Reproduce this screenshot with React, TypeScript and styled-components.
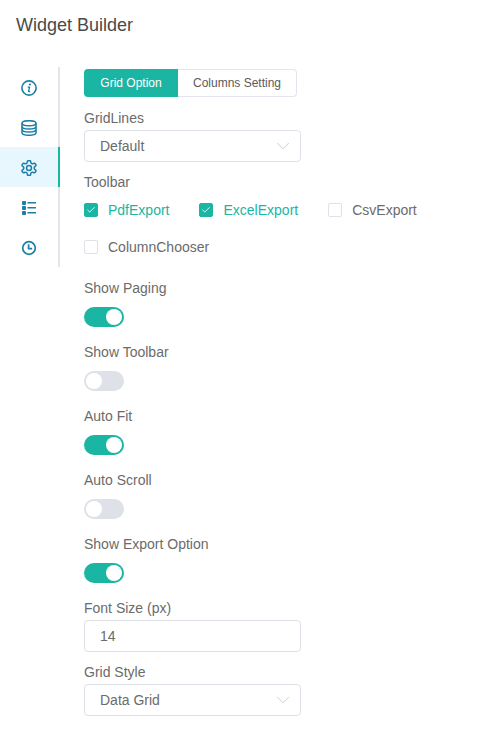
import React from 'react'
import styled, { createGlobalStyle } from 'styled-components'
import { ChevronDown, Check } from 'lucide-react'

const GlobalStyle = createGlobalStyle`
  html, body {
    margin: 0;
    padding: 0;
    background: #fff;
  }
  body {
    font-family: "Liberation Sans", Arial, sans-serif;
    color: #6b6b6b;
    font-size: 14px;
  }
`

const Page = styled.div`
  width: 496px;
  height: 731px;
  overflow: hidden;
  box-sizing: border-box;
`

const Title = styled.h1`
  margin: 0;
  padding: 13px 16px 0;
  height: 67px;
  box-sizing: border-box;
  font-size: 18px;
  line-height: 24px;
  font-weight: 400;
  color: #4a4a4a;
`

const Body = styled.div`
  display: flex;
  align-items: flex-start;
  gap: 24px;
`

const Nav = styled.nav`
  width: 60px;
  flex: none;
  display: flex;
  flex-direction: column;
  box-sizing: border-box;
  border-right: 2px solid #e3e5ec;
`

const NavItem = styled.div<{ $active?: boolean }>`
  height: 40px;
  margin-right: -2px;
  padding-top: 1px;
  display: flex;
  align-items: center;
  justify-content: center;
  color: #1b7fa7;
  background: ${p => (p.$active ? '#e8f6fd' : 'transparent')};
  border-right: 2px solid ${p => (p.$active ? '#1ab5a3' : 'transparent')};
  box-sizing: border-box;
`

const Content = styled.div`
  width: 340px;
  padding-top: 2px;
  display: flex;
  flex-direction: column;
`

const Tabs = styled.div`
  display: flex;
  width: 213px;
  height: 28px;
  margin-bottom: 11px;
`

const Tab = styled.div<{ $active?: boolean }>`
  flex: ${p => (p.$active ? '0 0 94px' : '1')};
  display: flex;
  align-items: center;
  justify-content: center;
  box-sizing: border-box;
  font-size: 12px;
  color: ${p => (p.$active ? '#fff' : '#5a5a5a')};
  background: ${p => (p.$active ? '#1ab5a3' : '#fff')};
  border: ${p => (p.$active ? 'none' : '1px solid #e3e5ec')};
  border-left: none;
  border-radius: ${p => (p.$active ? '4px 0 0 4px' : '0 4px 4px 0')};
`

const Label = styled.div`
  height: 20px;
  line-height: 20px;
  font-size: 14px;
  color: #6b6b6b;
`

const Box = styled.div`
  width: 217px;
  height: 32px;
  margin: 2px 0 10px;
  padding: 0 15px;
  display: flex;
  align-items: center;
  justify-content: space-between;
  box-sizing: border-box;
  border: 1px solid #dfe1e8;
  border-radius: 4px;
  font-size: 14px;
  color: #6b6b6b;
`

const Arrow = styled(ChevronDown)`
  color: #c0c4cc;
  margin-right: -9px;
`

const CheckGroup = styled.div`
  display: flex;
  flex-wrap: wrap;
  column-gap: 30px;
  row-gap: 1px;
  margin-bottom: 13px;
`

const CheckRow = styled.div<{ $on?: boolean }>`
  display: flex;
  align-items: center;
  gap: 10px;
  height: 36px;
  font-size: 14px;
  color: ${p => (p.$on ? '#1ab5a3' : '#6b6b6b')};
`

const CheckBox = styled.span<{ $on?: boolean }>`
  width: 14px;
  height: 14px;
  box-sizing: border-box;
  display: flex;
  align-items: center;
  justify-content: center;
  border-radius: 2px;
  border: 1px solid ${p => (p.$on ? '#1ab5a3' : '#dfe1e8')};
  background: ${p => (p.$on ? '#1ab5a3' : '#fff')};
  color: #fff;
`

const ToggleField = styled.div`
  display: flex;
  flex-direction: column;
  align-items: flex-start;
  gap: 9px;
  margin-bottom: 15px;
`

const Toggle = styled.div<{ $on?: boolean }>`
  width: 40px;
  height: 20px;
  padding: 2px;
  box-sizing: border-box;
  border-radius: 10px;
  display: flex;
  justify-content: ${p => (p.$on ? 'flex-end' : 'flex-start')};
  background: ${p => (p.$on ? '#1ab5a3' : '#dfe1e8')};
`

const Knob = styled.span`
  width: 16px;
  height: 16px;
  border-radius: 50%;
  background: #fff;
`

const InfoIcon = () => (
  <svg width="16" height="16" viewBox="0 0 16 16" fill="none" stroke="currentColor">
    <circle cx="8" cy="8" r="7.1" strokeWidth="1.6" />
    <circle cx="9" cy="4.5" r="1.1" fill="currentColor" stroke="none" />
    <path d="M6.7 7.2h1.9l-1 3.8c-.1.5.1.7.5.7h1" strokeWidth="1.3" strokeLinejoin="round" />
  </svg>
)

const DatabaseIcon = () => (
  <svg width="16" height="16" viewBox="0 0 16 16" fill="none" stroke="currentColor" strokeWidth="1.5">
    <ellipse cx="8" cy="3.2" rx="7" ry="2.5" />
    <path d="M1 3.2v9.6c0 1.4 3.1 2.5 7 2.5s7-1.1 7-2.5V3.2" />
    <path d="M1 6.4c0 1.4 3.1 2.5 7 2.5s7-1.1 7-2.5M1 9.6c0 1.4 3.1 2.5 7 2.5s7-1.1 7-2.5" />
  </svg>
)

const CogIcon = () => (
  <svg width="16" height="16" viewBox="1.5 1.5 21 21" fill="none" stroke="currentColor" strokeWidth="2" strokeLinejoin="round">
    <path d="M12.22 2h-.44a2 2 0 0 0-2 2v.18a2 2 0 0 1-1 1.73l-.43.25a2 2 0 0 1-2 0l-.15-.08a2 2 0 0 0-2.73.73l-.22.38a2 2 0 0 0 .73 2.73l.15.1a2 2 0 0 1 1 1.72v.51a2 2 0 0 1-1 1.74l-.15.09a2 2 0 0 0-.73 2.73l.22.38a2 2 0 0 0 2.73.73l.15-.08a2 2 0 0 1 2 0l.43.25a2 2 0 0 1 1 1.73V20a2 2 0 0 0 2 2h.44a2 2 0 0 0 2-2v-.18a2 2 0 0 1 1-1.73l.43-.25a2 2 0 0 1 2 0l.15.08a2 2 0 0 0 2.73-.73l.22-.39a2 2 0 0 0-.73-2.73l-.15-.08a2 2 0 0 1-1-1.74v-.5a2 2 0 0 1 1-1.74l.15-.09a2 2 0 0 0 .73-2.73l-.22-.38a2 2 0 0 0-2.73-.73l-.15.08a2 2 0 0 1-2 0l-.43-.25a2 2 0 0 1-1-1.73V4a2 2 0 0 0-2-2z" />
    <circle cx="12" cy="12" r="3.2" />
  </svg>
)

const ListIcon = () => (
  <svg width="16" height="16" viewBox="0 0 16 16" fill="currentColor">
    <rect x="1" y="1" width="4" height="4" rx="1" />
    <rect x="1" y="6" width="4" height="4" rx="1" />
    <rect x="1" y="11" width="4" height="4" rx="1" />
    <rect x="6.5" y="2" width="8.5" height="1.5" />
    <rect x="6.5" y="7" width="8.5" height="1.5" />
    <rect x="6.5" y="12" width="8.5" height="1.5" />
  </svg>
)

const ClockIcon = () => (
  <svg width="16" height="16" viewBox="0 0 16 16" fill="none" stroke="currentColor" strokeWidth="1.7">
    <circle cx="8" cy="8" r="6.3" />
    <path d="M7.6 4.2v4.5h3.6" />
  </svg>
)

const Check14 = ({ label, on }: { label: string; on?: boolean }) => (
  <CheckRow $on={on}>
    <CheckBox $on={on}>{on && <Check size={10} strokeWidth={2} />}</CheckBox>
    {label}
  </CheckRow>
)

const ToggleRow = ({ label, on }: { label: string; on?: boolean }) => (
  <ToggleField>
    <Label>{label}</Label>
    <Toggle $on={on}>
      <Knob />
    </Toggle>
  </ToggleField>
)

const App = () => (
  <Page>
    <GlobalStyle />
    <Title>Widget Builder</Title>
    <Body>
      <Nav>
        <NavItem><InfoIcon /></NavItem>
        <NavItem><DatabaseIcon /></NavItem>
        <NavItem $active><CogIcon /></NavItem>
        <NavItem><ListIcon /></NavItem>
        <NavItem><ClockIcon /></NavItem>
      </Nav>
      <Content>
        <Tabs>
          <Tab $active>Grid Option</Tab>
          <Tab>Columns Setting</Tab>
        </Tabs>
        <Label>GridLines</Label>
        <Box>
          Default
          <Arrow size={22} strokeWidth={0.9} />
        </Box>
        <Label>Toolbar</Label>
        <CheckGroup>
          <Check14 label="PdfExport" on />
          <Check14 label="ExcelExport" on />
          <Check14 label="CsvExport" />
          <Check14 label="ColumnChooser" />
        </CheckGroup>
        <ToggleRow label="Show Paging" on />
        <ToggleRow label="Show Toolbar" />
        <ToggleRow label="Auto Fit" on />
        <ToggleRow label="Auto Scroll" />
        <ToggleRow label="Show Export Option" on />
        <Label>Font Size (px)</Label>
        <Box>14</Box>
        <Label>Grid Style</Label>
        <Box>
          Data Grid
          <Arrow size={22} strokeWidth={0.9} />
        </Box>
      </Content>
    </Body>
  </Page>
)

export default App
